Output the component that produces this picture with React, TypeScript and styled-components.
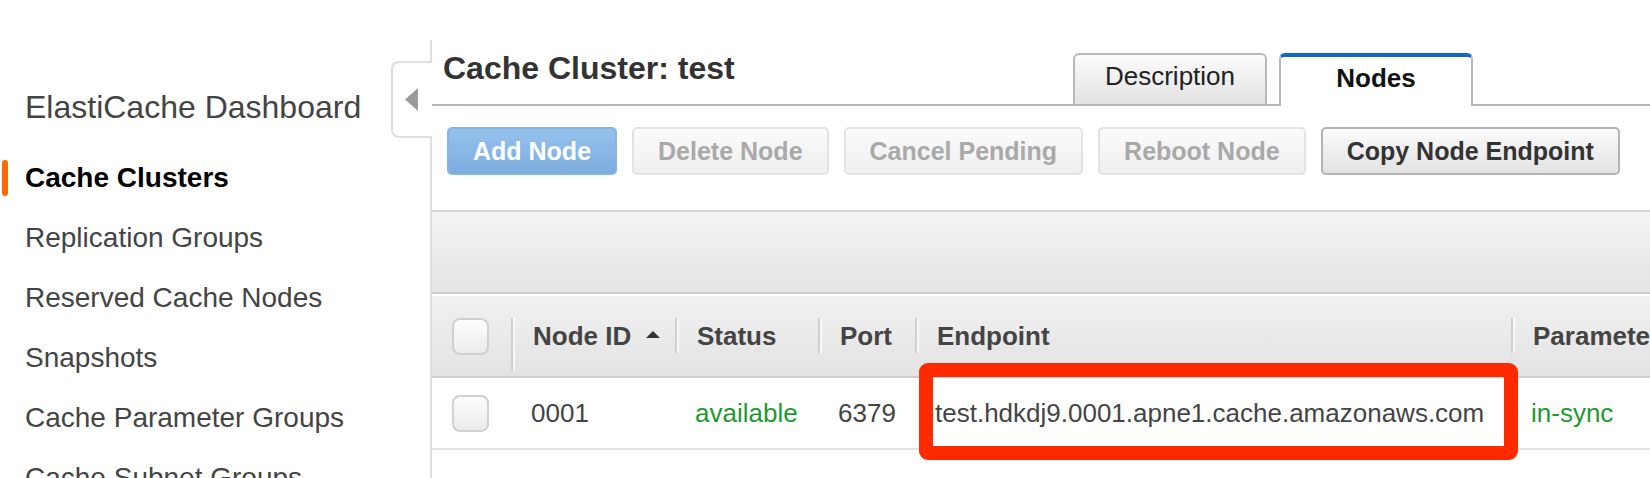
import React from 'react'
import styled, { createGlobalStyle, css } from 'styled-components'

const GlobalStyle = createGlobalStyle`
  html, body {
    margin: 0;
    padding: 0;
    background: #fff;
    overflow: hidden;
  }
  body {
    font-family: "Liberation Sans", Arial, Helvetica, sans-serif;
    color: #444;
  }
`

const columns = '79px 164px 143px 97px 596px 1fr'

const Page = styled.div`
  display: grid;
  grid-template-columns: 432px 1fr;
  width: 1650px;
  height: 478px;
  padding-top: 40px;
  box-sizing: border-box;
  overflow: hidden;
`

const Sidebar = styled.aside`
  position: relative;
  border-right: 2px solid #dedede;
  padding: 51px 0 0 25px;
`

const SidebarTitle = styled.h2`
  margin: 0 0 25px;
  font-size: 32px;
  line-height: 32px;
  font-weight: normal;
  color: #444;
  white-space: nowrap;
`

const NavList = styled.ul`
  list-style: none;
  margin: 0;
  padding: 0;
`

const NavItem = styled.li<{ $active?: boolean }>`
  position: relative;
  font-size: 28px;
  line-height: 60px;
  color: #444;
  white-space: nowrap;

  ${({ $active }) =>
    $active &&
    css`
      font-weight: bold;
      color: #000;

      &::before {
        content: "";
        position: absolute;
        left: -23px;
        top: 12px;
        width: 6px;
        height: 36px;
        border-radius: 3px;
        background: #ff6a00;
      }
    `}
`

const CollapseTab = styled.div`
  position: absolute;
  top: 21px;
  left: 391px;
  width: 41px;
  height: 77px;
  box-sizing: border-box;
  display: flex;
  align-items: center;
  justify-content: center;
  padding-right: 2px;
  background: #fff;
  border: 2px solid #dedede;
  border-right: none;
  border-radius: 8px 0 0 8px;
`

const Main = styled.main`
  min-width: 0;
  overflow: hidden;
`

const TitleBar = styled.div`
  display: flex;
  align-items: flex-end;
  height: 66px;
  box-sizing: border-box;
  padding-left: 11px;
  border-bottom: 2px solid #b5b5b5;
`

const Title = styled.h1`
  margin: 0 0 20px;
  font-size: 32px;
  line-height: 32px;
  font-weight: bold;
  color: #333;
  white-space: nowrap;
`

const Tabs = styled.div`
  display: flex;
  align-items: flex-end;
  gap: 12px;
  margin-left: auto;
  margin-right: 177px;
`

const Tab = styled.div<{ $active?: boolean }>`
  width: 194px;
  box-sizing: border-box;
  display: flex;
  align-items: center;
  justify-content: center;
  font-size: 26px;
  border: 2px solid #b8b8b8;
  border-bottom: none;
  border-radius: 6px 6px 0 0;

  ${({ $active }) =>
    $active
      ? css`
          height: 53px;
          margin-bottom: -2px;
          padding-bottom: 7px;
          border-top: 4px solid #1268c4;
          background: #fff;
          font-weight: bold;
          color: #111;
        `
      : css`
          height: 51px;
          padding-bottom: 6px;
          background: linear-gradient(#fbfbfb, #e3e3e3);
          color: #222;
        `}
`

const Toolbar = styled.div`
  display: flex;
  gap: 15px;
  padding: 21px 0 0 15px;
`

type Variant = 'primary' | 'disabled' | 'default'

const Button = styled.button<{ $variant: Variant }>`
  height: 48px;
  padding: 0 24px;
  box-sizing: border-box;
  border-radius: 5px;
  border: 2px solid;
  font-family: inherit;
  font-size: 25px;
  font-weight: bold;
  white-space: nowrap;
  cursor: default;

  ${({ $variant }) =>
    $variant === 'primary'
      ? css`
          background: linear-gradient(#95c1ec, #7daee0);
          border-color: #86b5e4;
          color: #fff;
        `
      : $variant === 'disabled'
      ? css`
          background: linear-gradient(#fbfbfb, #efefef);
          border-color: #e3e3e3;
          color: #a9a9a9;
        `
      : css`
          background: linear-gradient(#fbfbfb, #e2e2e2);
          border-color: #b3b3b3;
          color: #333;
        `}
`

const FilterBand = styled.div`
  margin-top: 35px;
  height: 84px;
  box-sizing: border-box;
  border-top: 2px solid #d6d6d6;
  border-bottom: 2px solid #cfcfcf;
  background: linear-gradient(#f4f4f4, #e4e4e4);
`

const Table = styled.div`
  margin-top: 2px;
`

const HeaderRow = styled.div`
  display: grid;
  grid-template-columns: ${columns};
  height: 82px;
  box-sizing: border-box;
  border-bottom: 2px solid #cfcfcf;
  background: linear-gradient(#f1f1f1, #e3e3e3);
`

const HeaderCell = styled.div<{ $sep?: 'short' | 'tall' }>`
  position: relative;
  display: flex;
  align-items: center;
  padding-left: 22px;
  font-size: 26px;
  font-weight: bold;
  color: #444;
  white-space: nowrap;

  ${({ $sep }) =>
    $sep &&
    css`
      &::before {
        content: "";
        position: absolute;
        left: 0;
        top: 22px;
        width: 2px;
        height: ${$sep === 'tall' ? 52 : 35}px;
        background: #cfcfcf;
        box-shadow: 2px 0 0 #f8f8f8;
      }
    `}
`

const CheckCell = styled.div`
  display: flex;
  align-items: center;
  padding-left: 20px;
`

const Checkbox = styled.span`
  display: block;
  width: 37px;
  height: 37px;
  box-sizing: border-box;
  border: 2px solid #d0d0d0;
  border-radius: 8px;
  background: linear-gradient(#fdfdfd, #ebebeb);
`

const SortArrow = styled.svg`
  margin: 0 0 4px 15px;
  flex: none;
`

const DataRow = styled.div`
  display: grid;
  grid-template-columns: ${columns};
  height: 72px;
  box-sizing: border-box;
  border-bottom: 2px solid #e3e3e3;
  background: #fff;
`

const DataCell = styled.div<{ $ok?: boolean }>`
  position: relative;
  display: flex;
  align-items: center;
  padding-left: 20px;
  font-size: 26px;
  color: ${({ $ok }) => ($ok ? '#1d9a2e' : '#444')};
  white-space: nowrap;
`

const Highlight = styled.div`
  position: absolute;
  left: 4px;
  top: -15px;
  width: 599px;
  height: 97px;
  box-sizing: border-box;
  border: 14px solid #ff2a00;
  border-radius: 9px;
  pointer-events: none;
`

const navItems = [
  'Cache Clusters',
  'Replication Groups',
  'Reserved Cache Nodes',
  'Snapshots',
  'Cache Parameter Groups',
  'Cache Subnet Groups',
]

const buttons: { label: string; variant: Variant }[] = [
  { label: 'Add Node', variant: 'primary' },
  { label: 'Delete Node', variant: 'disabled' },
  { label: 'Cancel Pending', variant: 'disabled' },
  { label: 'Reboot Node', variant: 'disabled' },
  { label: 'Copy Node Endpoint', variant: 'default' },
]

export default function App() {
  return (
    <>
      <GlobalStyle />
      <Page>
        <Sidebar>
          <SidebarTitle>ElastiCache Dashboard</SidebarTitle>
          <NavList>
            {navItems.map((item, i) => (
              <NavItem key={item} $active={i === 0}>
                {item}
              </NavItem>
            ))}
          </NavList>
          <CollapseTab>
            <svg width="13" height="23" viewBox="0 0 13 23">
              <polygon points="13,0 13,23 0,11.5" fill="#9a9a9a" />
            </svg>
          </CollapseTab>
        </Sidebar>

        <Main>
          <TitleBar>
            <Title>Cache Cluster: test</Title>
            <Tabs>
              <Tab>Description</Tab>
              <Tab $active>Nodes</Tab>
            </Tabs>
          </TitleBar>

          <Toolbar>
            {buttons.map((b) => (
              <Button key={b.label} $variant={b.variant}>
                {b.label}
              </Button>
            ))}
          </Toolbar>

          <FilterBand />

          <Table>
            <HeaderRow>
              <CheckCell>
                <Checkbox />
              </CheckCell>
              <HeaderCell $sep="tall">
                <span>Node ID</span>
                <SortArrow width="14" height="7" viewBox="0 0 14 7">
                  <polygon points="7,0 14,7 0,7" fill="#333" />
                </SortArrow>
              </HeaderCell>
              <HeaderCell $sep="short">Status</HeaderCell>
              <HeaderCell $sep="short">Port</HeaderCell>
              <HeaderCell $sep="short">Endpoint</HeaderCell>
              <HeaderCell $sep="short">Parameter Group Status</HeaderCell>
            </HeaderRow>
            <DataRow>
              <CheckCell>
                <Checkbox />
              </CheckCell>
              <DataCell>0001</DataCell>
              <DataCell $ok>available</DataCell>
              <DataCell>6379</DataCell>
              <DataCell>
                test.hdkdj9.0001.apne1.cache.amazonaws.com
                <Highlight />
              </DataCell>
              <DataCell $ok>in-sync</DataCell>
            </DataRow>
          </Table>
        </Main>
      </Page>
    </>
  )
}
